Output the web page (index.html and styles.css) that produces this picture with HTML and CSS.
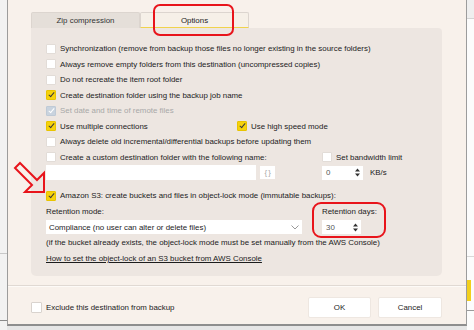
FILE: index.html
```html
<!DOCTYPE html>
<html lang="en">
<head>
    <meta charset="UTF-8">
    <title>Destination options</title>
    <link rel="stylesheet" href="styles.css">
</head>
<body>
    <div class="screen">
        <div class="strip strip-left">
            <div class="seg seg-a"></div>
            <div class="seg seg-b"></div>
        </div>

        <div class="dialog">
            <div class="tabs">
                <div class="tab">Zip compression</div>
                <div class="tab active">Options</div>
            </div>

            <div class="panel">
                <label class="row"><span class="box"></span>Synchronization (remove from backup those files no longer existing in the source folders)</label>
                <label class="row"><span class="box"></span>Always remove empty folders from this destination (uncompressed copies)</label>
                <label class="row"><span class="box"></span>Do not recreate the item root folder</label>
                <label class="row"><span class="box on"></span>Create destination folder using the backup job name</label>
                <label class="row disabled"><span class="box off"></span>Set date and time of remote files</label>
                <div class="row">
                    <label class="col col-conn"><span class="box on"></span>Use multiple connections</label>
                    <label class="col"><span class="box on"></span>Use high speed mode</label>
                </div>
                <label class="row"><span class="box"></span>Always delete old incremental/differential backups before updating them</label>
                <div class="row">
                    <label class="col col-custom"><span class="box"></span>Create a custom destination folder with the following name:</label>
                    <label class="col"><span class="box"></span>Set bandwidth limit</label>
                </div>
                <div class="field-row">
                    <div class="text-input"></div>
                    <div class="brace-btn">{ }</div>
                    <div class="spin-input speed">
                        <span>0</span>
                        <svg class="spin" width="5" height="9" viewBox="0 0 5 9"><path d="M2.5 0.5 L5 3.5 H0 Z M0 5.5 H5 L2.5 8.5 Z" fill="#333"/></svg>
                    </div>
                    <span class="unit">KB/s</span>
                </div>

                <label class="row s3"><span class="box on"></span>Amazon S3: create buckets and files in object-lock mode (immutable backups):</label>
                <div class="retention">
                    <div class="ret-mode">
                        <div class="row">Retention mode:</div>
                        <div class="select">
                            <span>Compliance (no user can alter or delete files)</span>
                            <svg width="8" height="5" viewBox="0 0 8 5"><path d="M0.5 0.5 L4 4 L7.5 0.5" stroke="#999" fill="none"/></svg>
                        </div>
                    </div>
                    <div class="ret-days">
                        <div class="row">Retention days:</div>
                        <div class="spin-input days">
                            <span>30</span>
                            <svg class="spin" width="5" height="9" viewBox="0 0 5 9"><path d="M2.5 0.5 L5 3.5 H0 Z M0 5.5 H5 L2.5 8.5 Z" fill="#333"/></svg>
                        </div>
                    </div>
                </div>
                <div class="row note">(if the bucket already exists, the object-lock mode must be set manually from the AWS Console)</div>
                <div class="row"><a class="link">How to set the object-lock of an S3 bucket from AWS Console</a></div>
            </div>

            <div class="separator"></div>

            <div class="footer">
                <label class="exclude"><span class="box"></span>Exclude this destination from backup</label>
                <div class="buttons">
                    <button class="btn">OK</button>
                    <button class="btn">Cancel</button>
                </div>
            </div>
        </div>

        <div class="strip strip-right">
            <div class="seg seg-top"></div>
            <div class="seg seg-mid"></div>
            <div class="seg seg-yellow"></div>
            <div class="seg seg-low"></div>
        </div>

        <!-- annotations drawn over the screenshot -->
        <div class="mark mark-tab"></div>
        <div class="mark mark-days"></div>
        <svg class="arrow" width="50" height="45" viewBox="0 0 50 45">
            <path d="M15 3 L32 20 L39 13 L39 32 L20 32 L27 25 L10 8 Z" fill="none" stroke="#e8141b" stroke-width="2" stroke-linejoin="miter"/>
        </svg>
    </div>
</body>
</html>
```

FILE: styles.css
```css
* {
    margin: 0;
    padding: 0;
    box-sizing: border-box;
}

body {
    width: 474px;
    height: 330px;
    overflow: hidden;
    background-color: #e6e6e6;
    font-family: "Liberation Sans", Arial, sans-serif;
    font-size: 7.9px;
    color: #1c1c1c;
}

.screen {
    position: relative;
    display: flex;
    width: 474px;
    height: 330px;
}

/* background windows at the sides */
.strip {
    display: flex;
    flex-direction: column;
    width: 7px;
}

.strip-left {
    background-color: #f2f2f2;
}

.strip-left .seg-a {
    height: 254px;
    border-bottom: 1px solid #c8c8c8;
}

.strip-left .seg-b {
    height: 67px;
    border-bottom: 1px solid #8a8a8a;
}

.strip-right {
    background-color: #fcfcfc;
}

.strip-right .seg-top {
    height: 19px;
    background-color: #efefef;
    border-bottom: 1px solid #d4d4d4;
}

.strip-right .seg-mid {
    height: 238px;
    border-bottom: 1px solid #d8d8d8;
}

.strip-right .seg-yellow {
    height: 21px;
    margin-top: 23px;
    width: 4px;
    background-color: #f2cf1c;
}

.strip-right .seg-low {
    height: 10px;
    border-bottom: 1px solid #9a9a9a;
}

/* dialog */
.dialog {
    display: flex;
    flex-direction: column;
    width: 460px;
    height: 326px;
    background-color: #f8f1eb;
    border-left: 1px solid #9c9c9c;
    border-right: 1px solid #9c9c9c;
    border-bottom: 2px solid #8e8e8e;
}

.tabs {
    display: flex;
    margin: 12px 0 0 23px;
    height: 16px;
}

.tab {
    width: 109px;
    display: flex;
    align-items: center;
    justify-content: center;
    background-color: #e5dfd9;
    border: 1px solid #dcd5cf;
    border-bottom: none;
    border-radius: 2px 2px 0 0;
    color: #333;
}

.tab.active {
    background-color: #f6f0e8;
    border-bottom: 1px solid #f0d34c;
    color: #1c1c1c;
}

.panel {
    display: flex;
    flex-direction: column;
    margin: 0 24px 0 23px;
    height: 248px;
    padding: 13px 0 0 15px;
    background-color: #ede6e1;
    border-radius: 0 4px 5px 5px;
}

.row {
    display: flex;
    align-items: center;
    height: 15.5px;
    white-space: nowrap;
}

.col {
    display: flex;
    align-items: center;
}

.col-conn {
    width: 191px;
}

.col-custom {
    width: 276px;
}

.box {
    position: relative;
    flex: none;
    width: 10px;
    height: 10px;
    margin-right: 4px;
    background-color: #fff;
    border: 1px solid #e2dcd7;
    border-radius: 1px;
}

.box.on {
    background-color: #f6d20c;
    border-color: #e8c400;
}

.box.off {
    background-color: #c9d3de;
    border-color: #bfcad6;
}

.box.on::after,
.box.off::after {
    content: "";
    position: absolute;
    left: 3px;
    top: 0px;
    width: 2px;
    height: 5px;
    border-right: 1.2px solid #3a3a3a;
    border-bottom: 1.2px solid #3a3a3a;
    transform: rotate(40deg);
}

.box.off::after {
    border-color: #fff;
}

.disabled {
    color: #a8a8a8;
}

.field-row {
    display: flex;
    align-items: center;
    height: 15px;
}

.text-input {
    width: 210px;
    height: 15px;
    background-color: #fff;
}

.brace-btn {
    width: 15px;
    height: 13px;
    margin-left: 4px;
    background-color: #fff;
    color: #aaa;
    display: flex;
    align-items: center;
    justify-content: center;
    letter-spacing: -0.5px;
}

.spin-input {
    display: flex;
    align-items: center;
    justify-content: space-between;
    height: 14px;
    padding: 0 3px 0 4px;
    background-color: #fff;
    color: #555;
}

.speed {
    width: 41px;
    margin-left: 47px;
}

.unit {
    margin-left: 7px;
}

.s3 {
    margin-top: 8px;
}

.retention {
    display: flex;
}

.ret-mode {
    width: 256px;
}

.select {
    display: flex;
    align-items: center;
    justify-content: space-between;
    height: 14px;
    margin-top: 1px;
    padding: 0 3px 0 3px;
    background-color: #fff;
}

.ret-days {
    margin-left: 20px;
}

.days {
    width: 39px;
    margin-top: 1px;
}

.note {
    margin-top: 1px;
}

.link {
    text-decoration: underline;
    color: #1c1c1c;
}

.separator {
    margin: 9px 0 0 0;
    height: 2px;
    border-top: 1px solid #e0d9d3;
    border-bottom: 1px solid #fdfaf7;
}

.footer {
    display: flex;
    align-items: center;
    justify-content: space-between;
    padding: 10px 24px 0 23px;
}

.exclude {
    display: flex;
    align-items: center;
}

.exclude .box {
    width: 11px;
    height: 11px;
    border-color: #d9d3ce;
}

.buttons {
    display: flex;
    gap: 7px;
}

.btn {
    width: 63px;
    height: 21px;
    font-family: inherit;
    font-size: 7.9px;
    color: #1c1c1c;
    background-color: #fff;
    border: 1px solid #eee7e1;
    border-radius: 2px;
}

.btn + .btn {
    width: 64px;
}

/* red annotation marks */
.mark {
    position: absolute;
    border: 2px solid #e8141b;
    border-radius: 7px;
}

.mark-tab {
    left: 153px;
    top: 4px;
    width: 81px;
    height: 32px;
}

.mark-days {
    left: 312px;
    top: 202px;
    width: 74px;
    height: 36px;
    border-radius: 9px;
}

.arrow {
    position: absolute;
    left: 5px;
    top: 160px;
}
```
